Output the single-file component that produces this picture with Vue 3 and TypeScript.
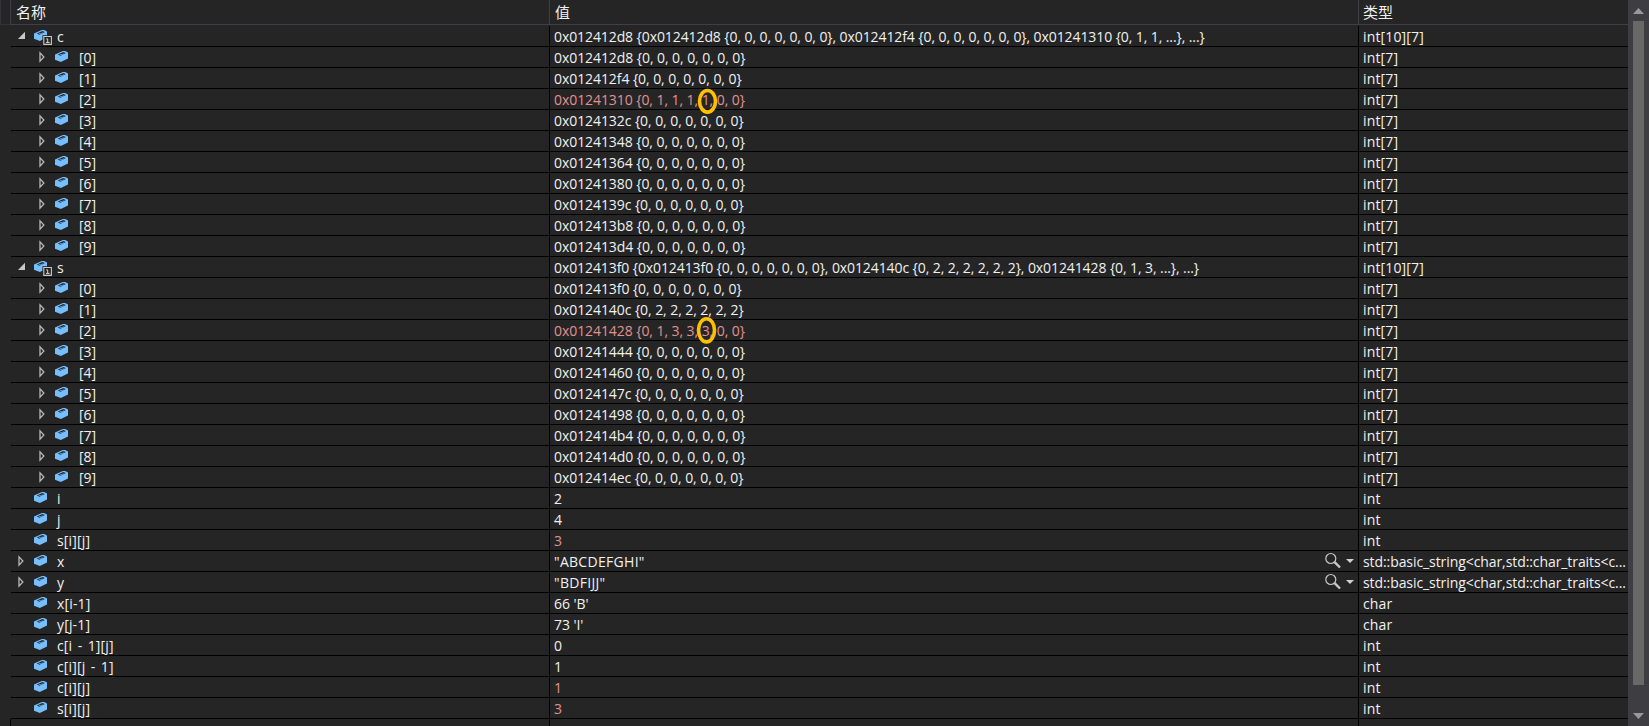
<script setup lang="ts">
interface WatchRow {
  name: string;
  value: string;
  type: string;
  level: number;
  expander?: "open" | "closed";
  pinned?: boolean;
  changed?: boolean;
  viewer?: boolean;
}

const zeros = "{0, 0, 0, 0, 0, 0, 0}";

function items(values: [string, string, boolean?][]): WatchRow[] {
  return values.map(([address, list, changed], index) => ({
    name: `[${index}]`,
    value: `${address} ${list}`,
    type: "int[7]",
    level: 1,
    expander: "closed",
    changed,
  }));
}

function leaf(name: string, value: string, type: string, changed = false): WatchRow {
  return { name, value, type, level: 0, changed };
}

const stringType = "std::basic_string<char,std::char_traits<c...";

const rows: WatchRow[] = [
  {
    name: "c",
    value:
      "0x012412d8 {0x012412d8 {0, 0, 0, 0, 0, 0, 0}, 0x012412f4 {0, 0, 0, 0, 0, 0, 0}, 0x01241310 {0, 1, 1, ...}, ...}",
    type: "int[10][7]",
    level: 0,
    expander: "open",
    pinned: true,
  },
  ...items([
    ["0x012412d8", zeros],
    ["0x012412f4", zeros],
    ["0x01241310", "{0, 1, 1, 1, 1, 0, 0}", true],
    ["0x0124132c", zeros],
    ["0x01241348", zeros],
    ["0x01241364", zeros],
    ["0x01241380", zeros],
    ["0x0124139c", zeros],
    ["0x012413b8", zeros],
    ["0x012413d4", zeros],
  ]),
  {
    name: "s",
    value:
      "0x012413f0 {0x012413f0 {0, 0, 0, 0, 0, 0, 0}, 0x0124140c {0, 2, 2, 2, 2, 2, 2}, 0x01241428 {0, 1, 3, ...}, ...}",
    type: "int[10][7]",
    level: 0,
    expander: "open",
    pinned: true,
  },
  ...items([
    ["0x012413f0", zeros],
    ["0x0124140c", "{0, 2, 2, 2, 2, 2, 2}"],
    ["0x01241428", "{0, 1, 3, 3, 3, 0, 0}", true],
    ["0x01241444", zeros],
    ["0x01241460", zeros],
    ["0x0124147c", zeros],
    ["0x01241498", zeros],
    ["0x012414b4", zeros],
    ["0x012414d0", zeros],
    ["0x012414ec", zeros],
  ]),
  leaf("i", "2", "int"),
  leaf("j", "4", "int"),
  leaf("s[i][j]", "3", "int", true),
  { name: "x", value: '"ABCDEFGHI"', type: stringType, level: 0, expander: "closed", viewer: true },
  { name: "y", value: '"BDFIJJ"', type: stringType, level: 0, expander: "closed", viewer: true },
  leaf("x[i-1]", "66 'B'", "char"),
  leaf("y[j-1]", "73 'I'", "char"),
  leaf("c[i - 1][j]", "0", "int"),
  leaf("c[i][j - 1]", "1", "int"),
  leaf("c[i][j]", "1", "int", true),
  leaf("s[i][j]", "3", "int", true),
];
</script>

<template>
  <div class="watch">
    <div class="gutter"></div>
    <div class="grid">
      <div class="header">
        <div class="headCell">名称</div>
        <div class="headCell">值</div>
        <div class="headCell">类型</div>
      </div>

      <div v-for="(row, index) in rows" :key="index" class="row">
        <div class="cell nameCell" :class="{ child: row.level === 1 }">
          <svg class="expander" width="9" height="20" viewBox="0 0 9 20">
            <path v-if="row.expander === 'open'" d="M7 5.7v7.2H0z" fill="#c8c8c8" />
            <path
              v-else-if="row.expander === 'closed'"
              d="M1 5.8v8.4L4.9 10z"
              fill="none"
              stroke="#b8b8b8"
              stroke-width="1.3"
            />
          </svg>
          <svg class="icon" width="19" height="20" viewBox="0 0 19 20">
            <path d="M0 7.6 7.8 4h2.4L13 5.6v5.8l-7.2 3.7L0 12.8z" fill="#75beff" />
            <path d="M2.8 7.5 8.4 4.9l2.5 1.1-5.4 2.7z" fill="#252526" />
            <path d="m4.6 7.3 2.4.5 1.6-1.5" fill="none" stroke="#75beff" stroke-width=".7" />
            <g v-if="row.pinned">
              <path d="M8.4 9.2h10.2V20H8.4z" fill="#252526" />
              <path d="M9.8 10.5h7.6v7.9H9.8z" fill="#252526" stroke="#c8c8c8" stroke-width="1.1" />
              <path d="M12.2 12.9h1.5v3.6M12 16.4h3.6" fill="none" stroke="#d8d8d8" />
            </g>
          </svg>
          <span class="name">{{ row.name }}</span>
        </div>
        <div class="cell valueCell">
          <span
            class="value"
            :class="{ changed: row.changed, summary: row.pinned, text: row.viewer }"
          >{{ row.value }}</span>
          <svg v-if="row.viewer" class="viewer" width="30" height="20" viewBox="0 0 30 20">
            <circle cx="5.8" cy="7.5" r="5" fill="none" stroke="#c8c8c8" stroke-width="1.2" />
            <path d="m9.6 11.1 5.4 5.4" stroke="#c8c8c8" stroke-width="2.4" />
            <path d="M21 7.9h8l-4 4z" fill="#d0d0d0" />
          </svg>
        </div>
        <div class="cell typeCell">
          <span class="type" :class="{ longType: row.viewer }">{{ row.type }}</span>
        </div>
      </div>

      <div class="row emptyRow">
        <div class="cell"></div>
        <div class="cell"></div>
        <div class="cell"></div>
      </div>
    </div>

    <div class="scrollbar">
      <svg class="arrow" width="11" height="6" viewBox="0 0 11 6">
        <path d="M0 6 5.5 0 11 6z" fill="#999" />
      </svg>
      <div class="thumb"></div>
      <svg class="arrow" width="11" height="6" viewBox="0 0 11 6">
        <path d="M0 0h11L5.5 6z" fill="#999" />
      </svg>
    </div>

    <!-- rings drawn over the changed elements -->
    <svg class="rings" width="1649" height="726" viewBox="0 0 1649 726">
      <ellipse cx="707.5" cy="101.3" rx="8" ry="10.8" />
      <ellipse cx="706.5" cy="330.3" rx="8" ry="11.6" />
    </svg>
  </div>
</template>

<style>
body {
  margin: 0;
  background: #252526;
}
</style>

<style scoped>
.watch {
  position: relative;
  display: flex;
  width: 1649px;
  height: 726px;
  overflow: hidden;
  background: #252526;
  color: #f1f1f1;
  font-family: "Open Sans", "Noto Sans CJK SC", sans-serif;
  font-size: 14px;
  line-height: 20px;
  white-space: pre;
}

.gutter {
  box-sizing: border-box;
  width: 10px;
  height: 25px;
  border-left: 1px solid #333337;
  border-bottom: 1px solid #333337;
}

.grid {
  width: 1618px;
}

.header,
.row {
  display: grid;
  grid-template-columns: 540px 809px 269px;
}

.header {
  height: 24px;
  margin-bottom: 1px;
  border-bottom: 1px solid #3f3f46;
}

.headCell {
  padding-left: 5px;
  border-left: 1px solid #3f3f46;
  font-family: "Noto Sans CJK SC", sans-serif;
  font-size: 15px;
  line-height: 23px;
}

.headCell + .headCell {
  margin-left: -1px;
}

.headCell:last-child {
  padding-left: 4px;
}

.row {
  height: 21px;
}

.cell {
  display: flex;
  box-sizing: border-box;
  min-width: 0;
  height: 21px;
  overflow: hidden;
  border-bottom: 1px solid #000;
}

.cell + .cell {
  margin-left: -1px;
  padding-left: 4px;
  border-left: 1px solid #000;
}

.nameCell {
  margin-left: 1px;
  padding-left: 7px;
}

.nameCell.child {
  padding-left: 28px;
}

.expander {
  flex: none;
  width: 9px;
  margin-right: 7px;
}

.icon {
  flex: none;
  margin-right: 4px;
}

.child .icon {
  margin-right: 5px;
}

.name,
.value,
.type {
  line-height: 22px;
}

.name {
  letter-spacing: 0.15px;
  word-spacing: 1.6px;
}

.child .name {
  letter-spacing: 0;
}

.value {
  flex: 1;
  letter-spacing: -0.07px;
}

.value.summary {
  letter-spacing: -0.09px;
}

.value.text {
  letter-spacing: 0.3px;
}

.type {
  letter-spacing: 0.15px;
}

.longType {
  letter-spacing: -0.08px;
}

.changed {
  color: #e29290;
}

.viewer {
  flex: none;
  margin-right: 4px;
}

.emptyRow .cell {
  border-bottom: 0;
}

.emptyRow .cell:first-child {
  border-left: 1px solid #000;
}

.scrollbar {
  display: flex;
  box-sizing: border-box;
  flex-direction: column;
  align-items: center;
  width: 21px;
  height: 726px;
  padding-top: 8px;
  background: #3e3e42;
}

.arrow {
  flex: none;
}

.thumb {
  width: 11px;
  height: 664px;
  margin: 7px 0 28px;
  background: #686868;
}

.rings {
  position: absolute;
  inset: 0;
  fill: none;
  stroke: #ffc000;
  stroke-width: 3.6;
}
</style>
